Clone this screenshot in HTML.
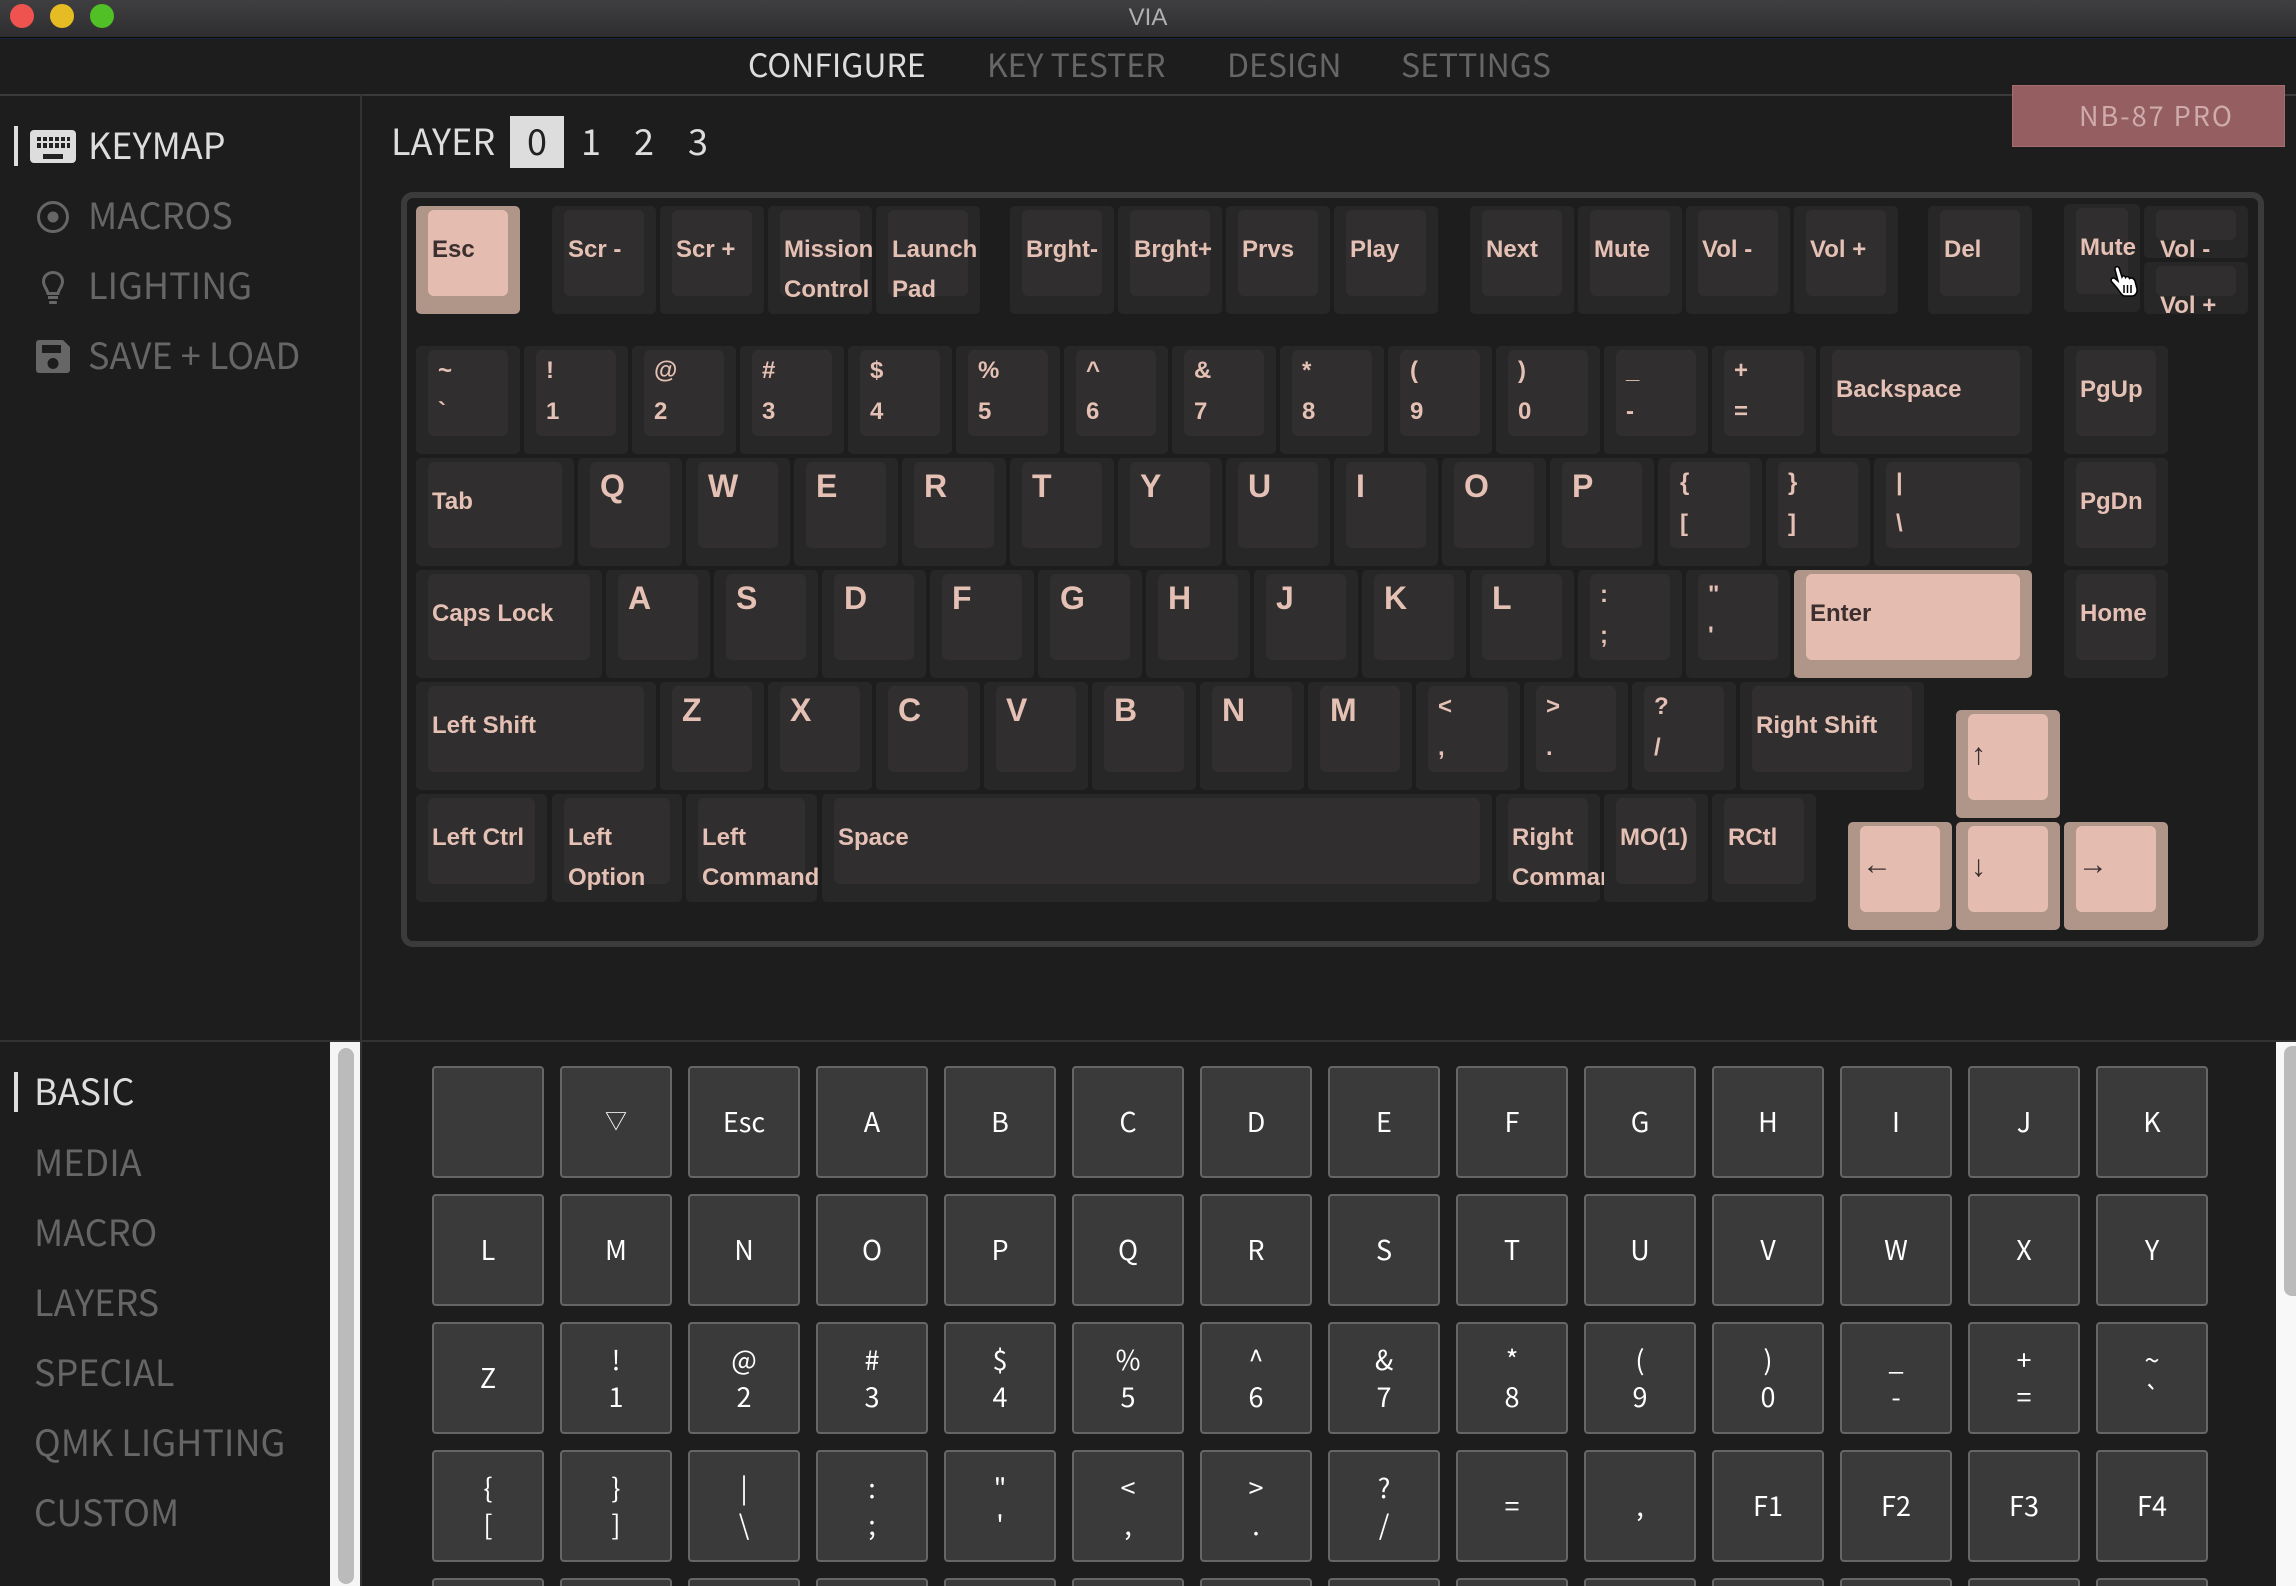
<!DOCTYPE html>
<html><head><meta charset="utf-8"><title>VIA</title>
<style>
html,body{margin:0;padding:0;width:2296px;height:1586px;overflow:hidden;background:#1d1d1d}
body{position:relative;font-family:"Noto Sans CJK JP","Liberation Sans",sans-serif}
.r{position:absolute}
.t{position:absolute;white-space:nowrap;line-height:40px;font-size:36px;color:#666}
.n{font-size:32px}
.w{color:#ddd}
.k{position:absolute;width:104px;height:108px;background:#272727;border-radius:5px}
.k i{position:absolute;left:12px;right:12px;top:4px;bottom:18px;background:#302e2e;border-radius:6px}
.k b{position:absolute;left:16px;top:24px;font:bold 24px/40px "Liberation Sans",sans-serif;color:#e5c0b4;white-space:nowrap}
.k.s b{left:22px;top:4px;line-height:41px}
.k.l b{left:22px;top:8px;font-size:32px}
.on{background:#b09688}
.on i{background:#e4bdb0}
.k.on b{color:#3b2f2f}
.k.ar b{font-weight:normal;font-size:30px;left:14px;top:23px}
.k.ar.v b{left:15px;top:25px}
.g{position:absolute;box-sizing:border-box;width:112px;height:112px;background:#3a3a3a;border:2px solid #666;border-radius:4px;color:#fff;font-size:27px;line-height:37px;text-align:center;display:flex;align-items:center;justify-content:center;padding-bottom:3px}
.c{height:8px;border-bottom:0;border-radius:4px 4px 0 0;padding:0}
</style></head><body>
<!-- title bar -->
<div class="r" style="left:0;top:0;width:2296px;height:37px;background:linear-gradient(#3f3f41,#2e2e30)"></div>
<div class="r" style="left:0;top:37px;width:2296px;height:1px;background:#0b0b0d"></div>
<div class="r" style="left:0;top:38px;width:2296px;height:1px;background:#16233f"></div>
<div class="r" style="left:10px;top:4px;width:24px;height:24px;border-radius:50%;background:#ee5350"></div>
<div class="r" style="left:50px;top:4px;width:24px;height:24px;border-radius:50%;background:#e5bc24"></div>
<div class="r" style="left:90px;top:4px;width:24px;height:24px;border-radius:50%;background:#50c026"></div>
<div class="r" style="left:1098px;top:0;width:100px;height:33px;text-align:center;color:#b0b0b0;font:24px/33px 'Liberation Sans',sans-serif;padding-top:1px">VIA</div>
<!-- nav -->
<div class="r" style="left:0;top:94px;width:2296px;height:2px;background:#3a3a3a"></div>
<div class="r" style="left:360px;top:95px;width:2px;height:1491px;background:#333"></div>
<div class="r" style="left:0;top:1040px;width:2296px;height:2px;background:#333"></div>
<div class="t w n" style="left:748px;top:44px">CONFIGURE</div>
<div class="t n" style="left:987px;top:44px">KEY TESTER</div>
<div class="t n" style="left:1227px;top:44px">DESIGN</div>
<div class="t n" style="left:1401px;top:44px">SETTINGS</div>
<!-- badge -->
<div class="r" style="left:2012px;top:85px;width:273px;height:62px;box-sizing:border-box;background:#955f62;border:1px solid #a36c6f"></div>
<div class="t" style="left:2079px;top:95px;font-size:27px;color:#cfabab;letter-spacing:2px">NB-87 PRO</div>
<!-- left nav -->
<div class="r" style="left:14px;top:126px;width:4px;height:40px;background:#ddd"></div>
<svg class="r" style="left:30px;top:130px" width="46" height="33" viewBox="0 0 46 33">
<rect width="46" height="33" rx="4" fill="#ddd"/>
<g fill="#222"><rect x="7" y="7" width="4" height="4"/><rect x="13" y="7" width="4" height="4"/><rect x="19" y="7" width="4" height="4"/><rect x="25" y="7" width="4" height="4"/><rect x="31" y="7" width="4" height="4"/><rect x="37" y="7" width="3" height="4"/>
<rect x="7" y="13" width="4" height="5"/><rect x="13" y="13" width="4" height="5"/><rect x="19" y="13" width="4" height="5"/><rect x="25" y="13" width="4" height="5"/><rect x="31" y="13" width="4" height="5"/><rect x="37" y="13" width="3" height="5"/>
<rect x="13" y="24" width="20" height="5"/></g></svg>
<div class="t w" style="left:88px;top:124px">KEYMAP</div>
<svg class="r" style="left:37px;top:201px" width="32" height="32" viewBox="0 0 32 32"><circle cx="16" cy="16" r="14.5" fill="none" stroke="#666" stroke-width="3"/><circle cx="16" cy="16" r="5.5" fill="#666"/></svg>
<div class="t" style="left:88px;top:194px">MACROS</div>
<svg class="r" style="left:42px;top:271px" width="22" height="33" viewBox="0 0 22 33"><path d="M11 1.500C5.500 1.500 1.500 5.500 1.500 10.500c0 5 3.500 7 4.500 12h10c1-5 4.500-7 4.500-12C20.500 5.500 16.500 1.500 11 1.500z" fill="none" stroke="#666" stroke-width="3"/><rect x="6" y="25" width="10" height="3" fill="#666"/><rect x="7" y="30" width="8" height="3" rx="1" fill="#666"/></svg>
<div class="t" style="left:88px;top:264px">LIGHTING</div>
<svg class="r" style="left:36px;top:340px" width="34" height="33" viewBox="0 0 34 33"><path d="M3 0H27L34 7V30a3 3 0 0 1-3 3H3a3 3 0 0 1-3-3V3a3 3 0 0 1 3-3zM6 5V13H25V5zM17 18a5.500 5.500 0 1 0 .01 0z" fill="#666" fill-rule="evenodd"/></svg>
<div class="t" style="left:88px;top:334px">SAVE + LOAD</div>
<!-- layer -->
<div class="t w" style="left:391px;top:120px">LAYER</div>
<div class="r" style="left:510px;top:116px;width:54px;height:52px;background:#ddd"></div>
<div class="t" style="left:510px;top:120px;width:54px;text-align:center;color:#222">0</div>
<div class="t w" style="left:564px;top:120px;width:54px;text-align:center">1</div>
<div class="t w" style="left:617px;top:120px;width:54px;text-align:center">2</div>
<div class="t w" style="left:671px;top:120px;width:54px;text-align:center">3</div>
<!-- keyboard frame -->
<div class="r" style="left:401px;top:192px;width:1863px;height:755px;box-sizing:border-box;border:6px solid #3b3b3b;border-radius:12px"></div>
<!-- row 0 -->
<div class="k on" style="left:416px;top:206px"><i></i><b>Esc</b></div>
<div class="k" style="left:552px;top:206px"><i></i><b>Scr -</b></div>
<div class="k" style="left:660px;top:206px"><i></i><b>Scr +</b></div>
<div class="k" style="left:768px;top:206px"><i></i><b>Mission<br>Control</b></div>
<div class="k" style="left:876px;top:206px"><i></i><b>Launch<br>Pad</b></div>
<div class="k" style="left:1010px;top:206px"><i></i><b>Brght-</b></div>
<div class="k" style="left:1118px;top:206px"><i></i><b>Brght+</b></div>
<div class="k" style="left:1226px;top:206px"><i></i><b>Prvs</b></div>
<div class="k" style="left:1334px;top:206px"><i></i><b>Play</b></div>
<div class="k" style="left:1470px;top:206px"><i></i><b>Next</b></div>
<div class="k" style="left:1578px;top:206px"><i></i><b>Mute</b></div>
<div class="k" style="left:1686px;top:206px"><i></i><b>Vol -</b></div>
<div class="k" style="left:1794px;top:206px"><i></i><b>Vol +</b></div>
<div class="k" style="left:1928px;top:206px"><i></i><b>Del</b></div>
<div class="k" style="left:2064px;top:204px;width:76px"><i></i><b>Mute</b></div>
<div class="k" style="left:2144px;top:206px;height:52px"><i></i><b>Vol -</b></div>
<div class="k" style="left:2144px;top:262px;height:52px"><i></i><b>Vol +</b></div>
<!-- row 1 -->
<div class="k s" style="left:416px;top:346px"><i></i><b>~<br>`</b></div>
<div class="k s" style="left:524px;top:346px"><i></i><b>!<br>1</b></div>
<div class="k s" style="left:632px;top:346px"><i></i><b>@<br>2</b></div>
<div class="k s" style="left:740px;top:346px"><i></i><b>#<br>3</b></div>
<div class="k s" style="left:848px;top:346px"><i></i><b>$<br>4</b></div>
<div class="k s" style="left:956px;top:346px"><i></i><b>%<br>5</b></div>
<div class="k s" style="left:1064px;top:346px"><i></i><b>^<br>6</b></div>
<div class="k s" style="left:1172px;top:346px"><i></i><b>&amp;<br>7</b></div>
<div class="k s" style="left:1280px;top:346px"><i></i><b>*<br>8</b></div>
<div class="k s" style="left:1388px;top:346px"><i></i><b>(<br>9</b></div>
<div class="k s" style="left:1496px;top:346px"><i></i><b>)<br>0</b></div>
<div class="k s" style="left:1604px;top:346px"><i></i><b>_<br>-</b></div>
<div class="k s" style="left:1712px;top:346px"><i></i><b>+<br>=</b></div>
<div class="k" style="left:1820px;top:346px;width:212px"><i></i><b>Backspace</b></div>
<div class="k" style="left:2064px;top:346px"><i></i><b>PgUp</b></div>
<!-- row 2 -->
<div class="k" style="left:416px;top:458px;width:158px"><i></i><b>Tab</b></div>
<div class="k l" style="left:578px;top:458px"><i></i><b>Q</b></div>
<div class="k l" style="left:686px;top:458px"><i></i><b>W</b></div>
<div class="k l" style="left:794px;top:458px"><i></i><b>E</b></div>
<div class="k l" style="left:902px;top:458px"><i></i><b>R</b></div>
<div class="k l" style="left:1010px;top:458px"><i></i><b>T</b></div>
<div class="k l" style="left:1118px;top:458px"><i></i><b>Y</b></div>
<div class="k l" style="left:1226px;top:458px"><i></i><b>U</b></div>
<div class="k l" style="left:1334px;top:458px"><i></i><b>I</b></div>
<div class="k l" style="left:1442px;top:458px"><i></i><b>O</b></div>
<div class="k l" style="left:1550px;top:458px"><i></i><b>P</b></div>
<div class="k s" style="left:1658px;top:458px"><i></i><b>{<br>[</b></div>
<div class="k s" style="left:1766px;top:458px"><i></i><b>}<br>]</b></div>
<div class="k s" style="left:1874px;top:458px;width:158px"><i></i><b>|<br>\</b></div>
<div class="k" style="left:2064px;top:458px"><i></i><b>PgDn</b></div>
<!-- row 3 -->
<div class="k" style="left:416px;top:570px;width:186px"><i></i><b>Caps Lock</b></div>
<div class="k l" style="left:606px;top:570px"><i></i><b>A</b></div>
<div class="k l" style="left:714px;top:570px"><i></i><b>S</b></div>
<div class="k l" style="left:822px;top:570px"><i></i><b>D</b></div>
<div class="k l" style="left:930px;top:570px"><i></i><b>F</b></div>
<div class="k l" style="left:1038px;top:570px"><i></i><b>G</b></div>
<div class="k l" style="left:1146px;top:570px"><i></i><b>H</b></div>
<div class="k l" style="left:1254px;top:570px"><i></i><b>J</b></div>
<div class="k l" style="left:1362px;top:570px"><i></i><b>K</b></div>
<div class="k l" style="left:1470px;top:570px"><i></i><b>L</b></div>
<div class="k s" style="left:1578px;top:570px"><i></i><b>:<br>;</b></div>
<div class="k s" style="left:1686px;top:570px"><i></i><b>"<br>'</b></div>
<div class="k on" style="left:1794px;top:570px;width:238px"><i></i><b>Enter</b></div>
<div class="k" style="left:2064px;top:570px"><i></i><b>Home</b></div>
<!-- row 4 -->
<div class="k" style="left:416px;top:682px;width:240px"><i></i><b>Left Shift</b></div>
<div class="k l" style="left:660px;top:682px"><i></i><b>Z</b></div>
<div class="k l" style="left:768px;top:682px"><i></i><b>X</b></div>
<div class="k l" style="left:876px;top:682px"><i></i><b>C</b></div>
<div class="k l" style="left:984px;top:682px"><i></i><b>V</b></div>
<div class="k l" style="left:1092px;top:682px"><i></i><b>B</b></div>
<div class="k l" style="left:1200px;top:682px"><i></i><b>N</b></div>
<div class="k l" style="left:1308px;top:682px"><i></i><b>M</b></div>
<div class="k s" style="left:1416px;top:682px"><i></i><b>&lt;<br>,</b></div>
<div class="k s" style="left:1524px;top:682px"><i></i><b>&gt;<br>.</b></div>
<div class="k s" style="left:1632px;top:682px"><i></i><b>?<br>/</b></div>
<div class="k" style="left:1740px;top:682px;width:184px"><i></i><b>Right Shift</b></div>
<div class="k on ar v" style="left:1956px;top:710px"><i></i><b>↑</b></div>
<!-- row 5 -->
<div class="k" style="left:416px;top:794px;width:131px"><i></i><b>Left Ctrl</b></div>
<div class="k" style="left:552px;top:794px;width:130px"><i></i><b>Left<br>Option</b></div>
<div class="k" style="left:686px;top:794px;width:131px"><i></i><b>Left<br>Command</b></div>
<div class="k" style="left:822px;top:794px;width:670px"><i></i><b>Space</b></div>
<div class="k" style="left:1496px;top:794px"><i></i><b>Right<br>Command</b></div>
<div class="k" style="left:1604px;top:794px"><i></i><b>MO(1)</b></div>
<div class="k" style="left:1712px;top:794px"><i></i><b>RCtl</b></div>
<div class="k on ar" style="left:1848px;top:822px"><i></i><b>←</b></div>
<div class="k on ar v" style="left:1956px;top:822px"><i></i><b>↓</b></div>
<div class="k on ar" style="left:2064px;top:822px"><i></i><b>→</b></div>
<!-- cursor -->
<svg class="r" style="left:2110px;top:266px" width="28" height="32" viewBox="0 0 28 32"><path d="M6 1C7.500 0 9 1 9.500 3L12 11C13 9 15 10 15.500 11.500C16.500 10 19 10.500 19.500 12.500C21 11.500 24 12 25 15L27 23C27.500 27 25 30 22 30L15 30C12 30 10 26 7 22L1.500 15.500C0 13 3 11 5 12.500L8 15L5 3.500C4.700 2 5 1.500 6 1Z" fill="#fff" stroke="#000" stroke-width="1.500"/><path d="M14 19V27M17.500 19V27M21 19V27" stroke="#000" stroke-width="1.500"/></svg>
<!-- bottom left -->
<div class="r" style="left:14px;top:1072px;width:4px;height:40px;background:#ddd"></div>
<div class="t w" style="left:34px;top:1070px">BASIC</div>
<div class="t" style="left:34px;top:1141px">MEDIA</div>
<div class="t" style="left:34px;top:1211px">MACRO</div>
<div class="t" style="left:34px;top:1281px">LAYERS</div>
<div class="t" style="left:34px;top:1351px">SPECIAL</div>
<div class="t" style="left:34px;top:1421px">QMK LIGHTING</div>
<div class="t" style="left:34px;top:1491px">CUSTOM</div>
<div class="r" style="left:330px;top:1042px;width:30px;height:544px;background:#f5f5f5"></div>
<div class="r" style="left:338px;top:1048px;width:16px;height:536px;border-radius:8px;background:#bbb"></div>
<div class="r" style="left:2276px;top:1042px;width:20px;height:544px;background:#f8f8f8"></div>
<div class="r" style="left:2284px;top:1046px;width:12px;height:250px;border-radius:8px 0 0 8px;background:#bbb"></div>
<!-- keycodes row 1 -->
<div class="g" style="left:432px;top:1066px"></div>
<div class="g" style="left:560px;top:1066px"><span style="font-size:22px">▽</span></div>
<div class="g" style="left:688px;top:1066px">Esc</div>
<div class="g" style="left:816px;top:1066px">A</div>
<div class="g" style="left:944px;top:1066px">B</div>
<div class="g" style="left:1072px;top:1066px">C</div>
<div class="g" style="left:1200px;top:1066px">D</div>
<div class="g" style="left:1328px;top:1066px">E</div>
<div class="g" style="left:1456px;top:1066px">F</div>
<div class="g" style="left:1584px;top:1066px">G</div>
<div class="g" style="left:1712px;top:1066px">H</div>
<div class="g" style="left:1840px;top:1066px">I</div>
<div class="g" style="left:1968px;top:1066px">J</div>
<div class="g" style="left:2096px;top:1066px">K</div>
<!-- row 2 -->
<div class="g" style="left:432px;top:1194px">L</div>
<div class="g" style="left:560px;top:1194px">M</div>
<div class="g" style="left:688px;top:1194px">N</div>
<div class="g" style="left:816px;top:1194px">O</div>
<div class="g" style="left:944px;top:1194px">P</div>
<div class="g" style="left:1072px;top:1194px">Q</div>
<div class="g" style="left:1200px;top:1194px">R</div>
<div class="g" style="left:1328px;top:1194px">S</div>
<div class="g" style="left:1456px;top:1194px">T</div>
<div class="g" style="left:1584px;top:1194px">U</div>
<div class="g" style="left:1712px;top:1194px">V</div>
<div class="g" style="left:1840px;top:1194px">W</div>
<div class="g" style="left:1968px;top:1194px">X</div>
<div class="g" style="left:2096px;top:1194px">Y</div>
<!-- row 3 -->
<div class="g" style="left:432px;top:1322px">Z</div>
<div class="g" style="left:560px;top:1322px"><span>!<br>1</span></div>
<div class="g" style="left:688px;top:1322px"><span>@<br>2</span></div>
<div class="g" style="left:816px;top:1322px"><span>#<br>3</span></div>
<div class="g" style="left:944px;top:1322px"><span>$<br>4</span></div>
<div class="g" style="left:1072px;top:1322px"><span>%<br>5</span></div>
<div class="g" style="left:1200px;top:1322px"><span>^<br>6</span></div>
<div class="g" style="left:1328px;top:1322px"><span>&amp;<br>7</span></div>
<div class="g" style="left:1456px;top:1322px"><span>*<br>8</span></div>
<div class="g" style="left:1584px;top:1322px"><span>(<br>9</span></div>
<div class="g" style="left:1712px;top:1322px"><span>)<br>0</span></div>
<div class="g" style="left:1840px;top:1322px"><span>_<br>-</span></div>
<div class="g" style="left:1968px;top:1322px"><span>+<br>=</span></div>
<div class="g" style="left:2096px;top:1322px"><span>~<br>`</span></div>
<!-- row 4 -->
<div class="g" style="left:432px;top:1450px"><span>{<br>[</span></div>
<div class="g" style="left:560px;top:1450px"><span>}<br>]</span></div>
<div class="g" style="left:688px;top:1450px"><span>|<br>\</span></div>
<div class="g" style="left:816px;top:1450px"><span>:<br>;</span></div>
<div class="g" style="left:944px;top:1450px"><span>"<br>'</span></div>
<div class="g" style="left:1072px;top:1450px"><span>&lt;<br>,</span></div>
<div class="g" style="left:1200px;top:1450px"><span>&gt;<br>.</span></div>
<div class="g" style="left:1328px;top:1450px"><span>?<br>/</span></div>
<div class="g" style="left:1456px;top:1450px">=</div>
<div class="g" style="left:1584px;top:1450px">,</div>
<div class="g" style="left:1712px;top:1450px">F1</div>
<div class="g" style="left:1840px;top:1450px">F2</div>
<div class="g" style="left:1968px;top:1450px">F3</div>
<div class="g" style="left:2096px;top:1450px">F4</div>
<!-- row 5 (cut off by the window) -->
<div class="g c" style="left:432px;top:1578px"></div>
<div class="g c" style="left:560px;top:1578px"></div>
<div class="g c" style="left:688px;top:1578px"></div>
<div class="g c" style="left:816px;top:1578px"></div>
<div class="g c" style="left:944px;top:1578px"></div>
<div class="g c" style="left:1072px;top:1578px"></div>
<div class="g c" style="left:1200px;top:1578px"></div>
<div class="g c" style="left:1328px;top:1578px"></div>
<div class="g c" style="left:1456px;top:1578px"></div>
<div class="g c" style="left:1584px;top:1578px"></div>
<div class="g c" style="left:1712px;top:1578px"></div>
<div class="g c" style="left:1840px;top:1578px"></div>
<div class="g c" style="left:1968px;top:1578px"></div>
<div class="g c" style="left:2096px;top:1578px"></div>
</body></html>
